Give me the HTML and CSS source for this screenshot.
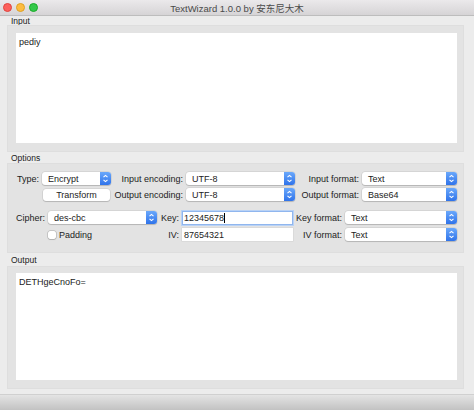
FILE: index.html
```html
<!DOCTYPE html>
<html lang="zh">
<head>
    <meta charset="UTF-8">
    <title>TextWizard</title>
    <link rel="stylesheet" href="styles.css">
</head>
<body>
    <div class="window">
        <!-- title bar -->
        <div class="titlebar">
            <div class="lights">
                <span class="light red"></span>
                <span class="light yellow"></span>
                <span class="light green"></span>
            </div>
            <div class="title">TextWizard 1.0.0 by 安东尼大木</div>
        </div>

        <div class="section-label label-input">Input</div>
        <div class="group group-input">
            <div class="text-area">pediy</div>
        </div>

        <div class="section-label label-options">Options</div>
        <div class="group group-options">
            <div class="opt-grid grid-top">
                <div class="opt-label">Type:</div>
                <div class="select"><span class="select-text">Encrypt</span><span class="stepper"><svg width="11" height="13" viewBox="0 0 11 13"><path d="M3.5 5.2 L5.5 3.4 L7.5 5.2 M3.5 7.8 L5.5 9.6 L7.5 7.8" fill="none" stroke="#fff" stroke-width="1.1"/></svg></span></div>
                <div class="opt-label">Input encoding:</div>
                <div class="select"><span class="select-text">UTF-8</span><span class="stepper"><svg width="11" height="13" viewBox="0 0 11 13"><path d="M3.5 5.2 L5.5 3.4 L7.5 5.2 M3.5 7.8 L5.5 9.6 L7.5 7.8" fill="none" stroke="#fff" stroke-width="1.1"/></svg></span></div>
                <div class="opt-label">Input format:</div>
                <div class="select"><span class="select-text">Text</span><span class="stepper"><svg width="11" height="13" viewBox="0 0 11 13"><path d="M3.5 5.2 L5.5 3.4 L7.5 5.2 M3.5 7.8 L5.5 9.6 L7.5 7.8" fill="none" stroke="#fff" stroke-width="1.1"/></svg></span></div>

                <div></div>
                <button class="button">Transform</button>
                <div class="opt-label">Output encoding:</div>
                <div class="select"><span class="select-text">UTF-8</span><span class="stepper"><svg width="11" height="13" viewBox="0 0 11 13"><path d="M3.5 5.2 L5.5 3.4 L7.5 5.2 M3.5 7.8 L5.5 9.6 L7.5 7.8" fill="none" stroke="#fff" stroke-width="1.1"/></svg></span></div>
                <div class="opt-label">Output format:</div>
                <div class="select"><span class="select-text">Base64</span><span class="stepper"><svg width="11" height="13" viewBox="0 0 11 13"><path d="M3.5 5.2 L5.5 3.4 L7.5 5.2 M3.5 7.8 L5.5 9.6 L7.5 7.8" fill="none" stroke="#fff" stroke-width="1.1"/></svg></span></div>
            </div>

            <div class="opt-grid grid-bottom">
                <div class="opt-label">Cipher:</div>
                <div class="select"><span class="select-text">des-cbc</span><span class="stepper"><svg width="11" height="13" viewBox="0 0 11 13"><path d="M3.5 5.2 L5.5 3.4 L7.5 5.2 M3.5 7.8 L5.5 9.6 L7.5 7.8" fill="none" stroke="#fff" stroke-width="1.1"/></svg></span></div>
                <div class="opt-label">Key:</div>
                <div class="field focused">12345678<span class="caret"></span></div>
                <div class="opt-label">Key format:</div>
                <div class="select"><span class="select-text">Text</span><span class="stepper"><svg width="11" height="13" viewBox="0 0 11 13"><path d="M3.5 5.2 L5.5 3.4 L7.5 5.2 M3.5 7.8 L5.5 9.6 L7.5 7.8" fill="none" stroke="#fff" stroke-width="1.1"/></svg></span></div>

                <div></div>
                <label class="check"><span class="check-box"></span>Padding</label>
                <div class="opt-label">IV:</div>
                <div class="field">87654321</div>
                <div class="opt-label">IV format:</div>
                <div class="select"><span class="select-text">Text</span><span class="stepper"><svg width="11" height="13" viewBox="0 0 11 13"><path d="M3.5 5.2 L5.5 3.4 L7.5 5.2 M3.5 7.8 L5.5 9.6 L7.5 7.8" fill="none" stroke="#fff" stroke-width="1.1"/></svg></span></div>
            </div>
        </div>

        <div class="section-label label-output">Output</div>
        <div class="group group-output">
            <div class="text-area">DETHgeCnoFo=</div>
        </div>

        <div class="bottom-space"></div>
        <div class="bottom-edge"></div>
    </div>
</body>
</html>
```

FILE: styles.css
```css
body {
    margin: 0;
    padding: 0;
    font-family: "Liberation Sans", "Noto Sans CJK SC", sans-serif;
    background-color: #ececec;
    color: #222;
}

.window {
    width: 474px;
    height: 410px;
    display: flex;
    flex-direction: column;
    background-color: #ececec;
    overflow: hidden;
}

.titlebar {
    position: relative;
    height: 15px;
    background: linear-gradient(#ebe9eb, #d6d4d6);
    border-bottom: 1px solid #bdbdbd;
    display: flex;
    align-items: center;
    justify-content: center;
}

.lights {
    position: absolute;
    left: 3px;
    top: 3px;
    display: flex;
    gap: 4px;
}

.light {
    width: 9px;
    height: 9px;
    border-radius: 50%;
    box-sizing: border-box;
}

.light.red {
    background-color: #fc605c;
    border: 1px solid #e0443e;
}

.light.yellow {
    background-color: #fdbc40;
    border: 1px solid #dea123;
}

.light.green {
    background-color: #34c84a;
    border: 1px solid #1aab29;
}

.title {
    font-size: 9.5px;
    color: #4a4a4a;
}

.section-label {
    font-size: 8.5px;
    color: #222;
    padding-left: 11px;
    display: flex;
    align-items: center;
}

.label-input {
    height: 9px;
}

.label-options {
    height: 11px;
}

.label-output {
    height: 13px;
}

.group {
    margin: 0 10px 0 7px;
    background-color: #e3e3e3;
    border: 1px solid #dedede;
    box-sizing: border-box;
}

.group-input {
    height: 127px;
    padding: 7px 6px 8px 8px;
}

.group-output {
    height: 123px;
    padding: 6px 6px 8px 8px;
}

.group-options {
    height: 90px;
    padding: 8px 6px 0 8px;
}

.text-area {
    background-color: #fff;
    height: 100%;
    font-size: 9px;
    line-height: 11px;
    padding: 4px 3px;
    box-sizing: border-box;
}

.opt-grid {
    display: grid;
    align-items: center;
    font-size: 9px;
}

.grid-top {
    grid-template-columns: 26px 69px 75px 109px 67px 95px;
    grid-auto-rows: 13px;
    row-gap: 3px;
}

.grid-bottom {
    grid-template-columns: 32px 109px 25px 111px 52px 112px;
    grid-auto-rows: 13px;
    row-gap: 4px;
    margin-top: 10px;
}

.opt-label {
    text-align: right;
    padding-right: 3px;
    white-space: nowrap;
}

.select {
    height: 13px;
    background-color: #fff;
    border-radius: 3px;
    box-shadow: 0 0 0 0.5px rgba(0,0,0,0.12), 0 1px 1px rgba(0,0,0,0.15);
    display: flex;
    align-items: center;
}

.select-text {
    flex: 1;
    padding-left: 6px;
}

.stepper {
    width: 11px;
    height: 13px;
    border-radius: 0 3px 3px 0;
    background: linear-gradient(#6aa8fb, #2f73ea);
    display: flex;
}

.button {
    height: 12px;
    margin: 0 1px;
    padding: 0;
    border: none;
    border-radius: 3px;
    background-color: #fff;
    box-shadow: 0 0 0 0.5px rgba(0,0,0,0.12), 0 1px 1px rgba(0,0,0,0.15);
    font-family: inherit;
    font-size: 9px;
    color: #222;
}

.field {
    height: 13px;
    background-color: #fff;
    box-sizing: border-box;
    padding-left: 2px;
    display: flex;
    align-items: center;
    box-shadow: 0 0 0 0.5px rgba(0,0,0,0.08);
}

.field.focused {
    height: 14px;
    border: 1px solid #90b6ee;
    box-shadow: 0 0 0 1px #b9d2f5;
    padding-left: 1px;
}

.caret {
    width: 1px;
    height: 10px;
    background-color: #000;
}

.check {
    display: flex;
    align-items: center;
    gap: 3px;
}

.check-box {
    width: 8px;
    height: 8px;
    background-color: #fff;
    border-radius: 2px;
    box-shadow: 0 0 0 0.5px rgba(0,0,0,0.25), 0 1px 1px rgba(0,0,0,0.1);
}

.bottom-space {
    height: 5px;
}

.bottom-edge {
    flex: 1;
    border-top: 1px solid #d0d0d0;
    background: linear-gradient(#e4e4e4, #c2c2c2);
}
```
